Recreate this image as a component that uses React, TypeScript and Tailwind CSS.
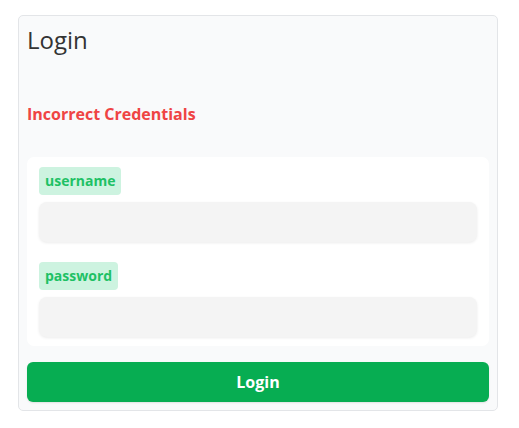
import React, { useState } from 'react';

const FONT = { fontFamily: '"Open Sans", "Noto Sans", sans-serif' };

const Field = ({ label, type, value, onChange }: { label: string; type: string; value: string; onChange: (v: string) => void }) => (
    <div>
        <label className="inline-block h-[28px] px-[6px] leading-[28px] rounded-[4px] bg-[#cdf3e0] text-[#1ec165] text-[14px] font-bold mb-[7px]">
            {label}
        </label>
        <input type={type} value={value} onChange={e => onChange(e.target.value)}
            className="block w-full h-[40px] rounded-[8px] bg-[#f4f4f4] shadow-[0_1px_3px_rgba(0,0,0,0.08)] outline-none px-3 text-gray-900" />
    </div>
);

export default function App() {
    const [username, setUsername] = useState('');
    const [password, setPassword] = useState('');

    return (
        <div className="pt-[15px] pl-[18px]" style={FONT}>
            <div className="w-[480px] border border-[#e3e5e8] rounded-[5px] bg-[#f9fafb] p-2">
                <h2 className="text-[24px] leading-[32px] text-[#333333]">Login</h2>
                <p className="mt-[46px] text-[16px] leading-[24px] font-bold text-[#ef4444]">Incorrect Credentials</p>
                <div className="mt-[31px] bg-white rounded-[7px] px-3 pt-[10px] pb-[9px] flex flex-col gap-[20px]">
                    <Field label="username" type="text" value={username} onChange={setUsername} />
                    <Field label="password" type="password" value={password} onChange={setPassword} />
                </div>
                <button className="mt-4 w-full h-[40px] rounded-[6px] bg-[#07ad52] text-white font-bold text-[16px] shadow-[0_1px_2px_rgba(0,0,0,0.1)]">
                    Login
                </button>
            </div>
        </div>
    );
}
